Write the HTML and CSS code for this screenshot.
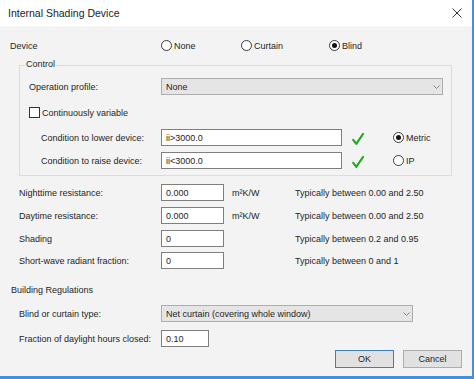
FILE: index.html
```html
<!DOCTYPE html>
<html lang="en">
<head>
  <meta charset="UTF-8" />
  <title>Internal Shading Device</title>
  <link rel="stylesheet" href="styles.css">
</head>
<body>
  <div class="window">
    <div class="titlebar">
      <span class="title">Internal Shading Device</span>
      <svg class="close" width="10" height="10" viewBox="0 0 10 10">
        <path d="M0.5 0.5 L9.5 9.5 M9.5 0.5 L0.5 9.5" stroke="#333" stroke-width="1" fill="none" />
      </svg>
    </div>

    <div class="content">
      <div class="row device-row">
        <span class="label device-label">Device</span>
        <span class="radio opt-none"><span class="circle"></span>None</span>
        <span class="radio opt-curtain"><span class="circle"></span>Curtain</span>
        <span class="radio"><span class="circle checked"></span>Blind</span>
      </div>

      <div class="group">
        <div class="group-title">Control</div>

        <div class="row group-row profile-row">
          <span class="label profile-label">Operation profile:</span>
          <div class="select profile-select">
            <span>None</span>
            <svg width="7" height="4" viewBox="0 0 7 4"><path d="M0.5 0.5 L3.5 3.5 L6.5 0.5" stroke="#888" fill="none" /></svg>
          </div>
        </div>

        <div class="row group-row check-row">
          <span class="checkbox"></span>
          <span>Continuously variable</span>
        </div>

        <div class="row cond-row cond-lower">
          <span class="label cond-label">Condition to lower device:</span>
          <div class="input cond-input">ii&gt;3000.0</div>
          <svg class="tick" width="12" height="12" viewBox="0 0 12 12"><path d="M1.2 6.8 L4.3 10.8 L11 1" stroke="#1faa1f" stroke-width="2.2" fill="none" stroke-linecap="round" stroke-linejoin="round" /></svg>
          <span class="radio unit-radio"><span class="circle checked"></span>Metric</span>
        </div>

        <div class="row cond-row cond-raise">
          <span class="label cond-label">Condition to raise device:</span>
          <div class="input cond-input">ii&lt;3000.0</div>
          <svg class="tick" width="12" height="12" viewBox="0 0 12 12"><path d="M1.2 6.8 L4.3 10.8 L11 1" stroke="#1faa1f" stroke-width="2.2" fill="none" stroke-linecap="round" stroke-linejoin="round" /></svg>
          <span class="radio unit-radio"><span class="circle"></span>IP</span>
        </div>
      </div>

      <div class="row field-row first-field">
        <span class="label field-label">Nighttime resistance:</span>
        <div class="input small-input">0.000</div>
        <span class="unit">m²K/W</span>
        <span class="hint">Typically between 0.00 and 2.50</span>
      </div>
      <div class="row field-row">
        <span class="label field-label">Daytime resistance:</span>
        <div class="input small-input">0.000</div>
        <span class="unit">m²K/W</span>
        <span class="hint">Typically between 0.00 and 2.50</span>
      </div>
      <div class="row field-row">
        <span class="label field-label">Shading</span>
        <div class="input small-input">0</div>
        <span class="unit"></span>
        <span class="hint">Typically between 0.2 and 0.95</span>
      </div>
      <div class="row field-row last-field">
        <span class="label field-label">Short-wave radiant fraction:</span>
        <div class="input small-input">0</div>
        <span class="unit"></span>
        <span class="hint">Typically between 0 and 1</span>
      </div>

      <div class="section-title">Building Regulations</div>

      <div class="row field-row type-row">
        <span class="label field-label">Blind or curtain type:</span>
        <div class="select type-select">
          <span>Net curtain (covering whole window)</span>
          <svg width="7" height="4" viewBox="0 0 7 4"><path d="M0.5 0.5 L3.5 3.5 L6.5 0.5" stroke="#888" fill="none" /></svg>
        </div>
      </div>

      <div class="row field-row fraction-row">
        <span class="label field-label">Fraction of daylight hours closed:</span>
        <div class="input fraction-input">0.10</div>
      </div>

      <div class="buttons">
        <button class="btn btn-default">OK</button>
        <button class="btn">Cancel</button>
      </div>
    </div>
  </div>
</body>
</html>
```

FILE: styles.css
```css
* {
  margin: 0;
  padding: 0;
  box-sizing: border-box;
}

body {
  font-family: "Liberation Sans", Arial, sans-serif;
  font-size: 9px;
  color: #1e1e1e;
  background: #f3f3f3;
}

.window {
  width: 474px;
  height: 379px;
  background: #f3f3f3;
  border-right: 2px solid #3f92e0;
  border-bottom: 3px solid #3f92e0;
  display: flex;
  flex-direction: column;
}

.titlebar {
  height: 27px;
  background: #fff;
  display: flex;
  align-items: center;
  justify-content: space-between;
  padding: 0 10px 0 8px;
  border-bottom: 1px solid #f7f7f7;
}

.title {
  font-size: 10.5px;
  color: #222;
}

.content {
  display: flex;
  flex-direction: column;
}

.row {
  display: flex;
  align-items: center;
  height: 17px;
}

.label {
  flex-shrink: 0;
  white-space: nowrap;
}

/* radios and checkbox */
.radio {
  display: flex;
  align-items: center;
  gap: 2px;
}

.circle {
  width: 11px;
  height: 11px;
  border: 1px solid #3a3a3a;
  border-radius: 50%;
  background: #fff;
  display: flex;
  align-items: center;
  justify-content: center;
}

.circle.checked::after {
  content: "";
  width: 5px;
  height: 5px;
  border-radius: 50%;
  background: #111;
}

.checkbox {
  width: 11px;
  height: 11px;
  border: 1px solid #333;
  background: #fff;
  margin-right: 2px;
}

/* device row */
.device-row {
  margin-top: 10px;
  padding-left: 10px;
}

.device-label {
  width: 151px;
}

.opt-none {
  width: 80px;
}

.opt-curtain {
  width: 88px;
}

/* control group */
.group {
  margin: 11px 0 0 19px;
  width: 433px;
  border: 1px solid #dcdcdc;
  padding-bottom: 6px;
}

.group-title {
  width: fit-content;
  margin: -7px 0 0 5px;
  padding: 0 1px;
  height: 11px;
  line-height: 11px;
  background: #f3f3f3;
}

.group-row {
  padding-left: 9px;
}

.profile-row {
  margin-top: 8px;
}

.profile-label {
  width: 132px;
}

.select {
  height: 17px;
  background: #e5e5e5;
  border: 1px solid #adadad;
  display: flex;
  align-items: center;
  justify-content: space-between;
  padding: 0 2px 0 4px;
}

.profile-select {
  width: 282px;
}

.type-select {
  width: 252px;
}

.check-row {
  margin-top: 9px;
}

.cond-row {
  padding-left: 21px;
}

.cond-lower {
  margin-top: 8px;
}

.cond-raise {
  margin-top: 6px;
}

.cond-label {
  width: 120px;
}

.input {
  height: 17px;
  background: #fff;
  border: 1px solid #7f7f7f;
  padding-left: 4px;
  display: flex;
  align-items: center;
}

.cond-input {
  width: 181px;
}

.tick {
  margin-left: 10px;
  margin-top: 2px;
}

.unit-radio {
  margin-left: 29px;
}

/* lower fields */
.field-row {
  padding-left: 19px;
  margin-top: 6px;
}

.first-field {
  margin-top: 8px;
}

.last-field {
  margin-top: 5px;
}

.field-label {
  width: 142px;
}

.small-input {
  width: 63px;
}

.unit {
  width: 71px;
  padding-left: 8px;
}

.section-title {
  margin-top: 16px;
  padding-left: 11px;
  height: 11px;
  line-height: 11px;
}

.type-row {
  margin-top: 9px;
}

.fraction-row {
  margin-top: 8px;
}

.fraction-input {
  width: 48px;
}

.buttons {
  display: flex;
  justify-content: flex-end;
  gap: 9px;
  margin-top: 3px;
  padding-right: 10px;
}

.btn {
  width: 59px;
  height: 18px;
  font-family: inherit;
  font-size: 9px;
  color: #1e1e1e;
  background: #e1e1e1;
  border: 1px solid #adadad;
}

.btn-default {
  border-color: #3b7fc4;
}
```
